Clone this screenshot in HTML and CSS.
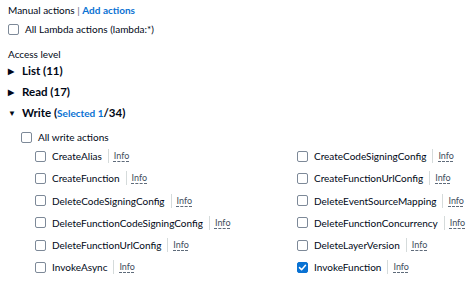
FILE: index.html
```html
<!DOCTYPE html>
<html>
<head>
  <title>Lambda actions</title>
  <link rel="stylesheet" href="styles.css">
</head>
<body>
  <div class="panel">
    <div class="header-line">Manual actions <span class="bar">|</span> <a class="link" href="#">Add actions</a></div>

    <label class="check-row top-check">
      <span class="box"></span>
      <span>All Lambda actions (lambda:*)</span>
    </label>

    <div class="section-label">Access level</div>

    <div class="group first"><span class="tri">&#9654;</span><span>List (11)</span></div>
    <div class="group"><span class="tri">&#9654;</span><span>Read (17)</span></div>
    <div class="group"><span class="tri down">&#9660;</span><span>Write (<span class="sel">Selected 1</span>/34)</span></div>

    <div class="write-body">
      <label class="check-row all-write">
        <span class="box"></span>
        <span>All write actions</span>
      </label>

      <div class="actions">
        <div class="action"><span class="box"></span><span class="name">CreateAlias</span><span class="info">Info</span></div>
        <div class="action"><span class="box"></span><span class="name">CreateCodeSigningConfig</span><span class="info">Info</span></div>
        <div class="action"><span class="box"></span><span class="name">CreateFunction</span><span class="info">Info</span></div>
        <div class="action"><span class="box"></span><span class="name">CreateFunctionUrlConfig</span><span class="info">Info</span></div>
        <div class="action"><span class="box"></span><span class="name">DeleteCodeSigningConfig</span><span class="info">Info</span></div>
        <div class="action"><span class="box"></span><span class="name">DeleteEventSourceMapping</span><span class="info">Info</span></div>
        <div class="action"><span class="box"></span><span class="name">DeleteFunctionCodeSigningConfig</span><span class="info">Info</span></div>
        <div class="action"><span class="box"></span><span class="name">DeleteFunctionConcurrency</span><span class="info">Info</span></div>
        <div class="action"><span class="box"></span><span class="name">DeleteFunctionUrlConfig</span><span class="info">Info</span></div>
        <div class="action"><span class="box"></span><span class="name">DeleteLayerVersion</span><span class="info">Info</span></div>
        <div class="action"><span class="box"></span><span class="name">InvokeAsync</span><span class="info">Info</span></div>
        <div class="action">
          <span class="box checked">
            <svg viewBox="0 0 12 12" width="9" height="9"><path d="M2 6.2 L4.8 9 L10 3" fill="none" stroke="#fff" stroke-width="2" stroke-linecap="round" stroke-linejoin="round"/></svg>
          </span>
          <span class="name">InvokeFunction</span><span class="info">Info</span>
        </div>
      </div>
    </div>
  </div>
</body>
</html>
```

FILE: styles.css
```css
body {
  margin: 0;
  background: #fff;
  color: #000716;
  font-family: "Lato", "Noto Sans", sans-serif;
  font-size: 10px;
}

.panel {
  padding: 3px 8px 0 8px;
}

.header-line {
  line-height: 14px;
  height: 14px;
}

.bar {
  color: #5f6b7a;
}

.link {
  color: #0972d3;
  font-weight: bold;
  text-decoration: none;
}

.check-row {
  display: flex;
  align-items: center;
  gap: 6px;
  line-height: 14px;
}

.top-check {
  margin-top: 5px;
}

.box {
  box-sizing: border-box;
  width: 11px;
  height: 11px;
  border: 1.5px solid #7d8998;
  border-radius: 2px;
  flex: none;
  display: flex;
  align-items: center;
  justify-content: center;
}

.box.checked {
  background: #0972d3;
  border-color: #0972d3;
}

.section-label {
  margin-top: 11px;
  line-height: 14px;
}

.group {
  font-size: 11.5px;
  font-weight: bold;
  line-height: 14px;
  margin-top: 7px;
  display: flex;
  align-items: center;
  gap: 5px;
}

.group.first {
  margin-top: 3px;
}

.tri {
  font-size: 8px;
  width: 9px;
}

.sel {
  color: #0972d3;
  font-size: 10px;
}

.write-body {
  padding-left: 13px;
  margin-top: 10px;
}

.actions {
  display: grid;
  grid-template-columns: 262px 1fr;
  row-gap: 8.3px;
  margin-top: 5px;
  padding-left: 14px;
}

.action {
  display: flex;
  align-items: center;
  line-height: 14px;
}

.action .box {
  margin-right: 6px;
}

.info {
  font-size: 9px;
  color: #414d5c;
  border-left: 1px solid #d5dbdb;
  margin-left: 6px;
  padding-left: 5px;
  line-height: 14px;
  text-decoration: underline dashed #5f6b7a;
  text-underline-offset: 2px;
}
```
